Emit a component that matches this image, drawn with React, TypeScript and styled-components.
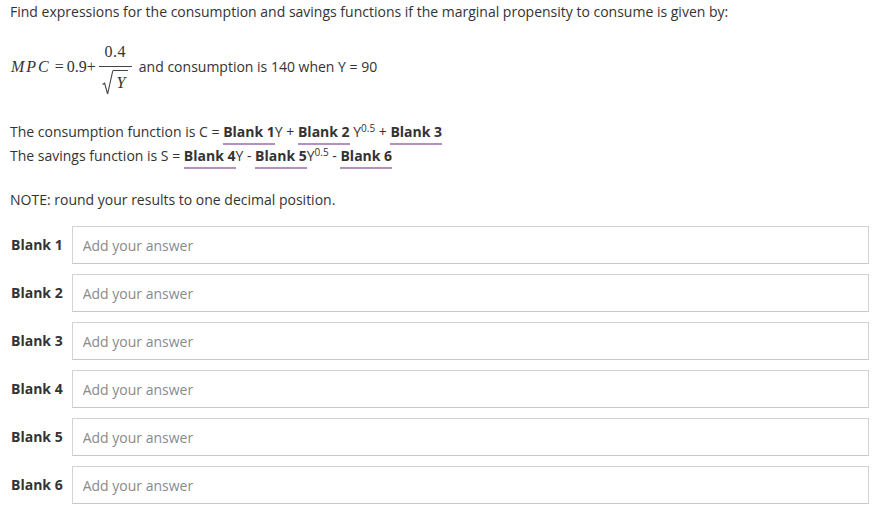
import React from "react";
import styled, { createGlobalStyle } from "styled-components";

const Global = createGlobalStyle`
  html, body { margin: 0; padding: 0; background: #ffffff; }
  body { font-family: "Open Sans", "Noto Sans", sans-serif; color: #333333; }
`;

const Page = styled.div`
  padding: 2px 15px 0 10px;
  font-size: 14px;
  line-height: 20px;
`;

const Para = styled.p<{ $mt?: number }>`
  margin: ${(p) => p.$mt ?? 0}px 0 0 0;
`;

const MathLine = styled.div`
  display: flex;
  align-items: center;
  margin-top: 15px;
  height: 60px;
`;

const MathExpr = styled.span`
  font-family: "Liberation Serif", "Times New Roman", serif;
  font-size: 16px;
  display: inline-flex;
  align-items: center;
  color: #333;
  padding-left: 1px;
`;

const Ital = styled.span`
  font-family: "Liberation Serif", "Times New Roman", serif;
  font-style: italic;
  letter-spacing: 2px;
`;

const Op = styled.span<{ $l?: number; $r?: number }>`
  font-family: "Liberation Serif", "Times New Roman", serif;
  margin: 0 ${(p) => p.$r ?? 0}px 0 ${(p) => p.$l ?? 0}px;
`;

const Numb = styled.span`
  font-family: "Liberation Serif", "Times New Roman", serif;
`;

const Frac = styled.span`
  display: inline-flex;
  flex-direction: column;
  align-items: center;
  margin: 2px 0 0 1px;
  width: 33px;
`;

const Num = styled.span`
  padding: 0 0 4px;
  border-bottom: 1px solid #444;
  line-height: 20px;
  width: 100%;
  text-align: center;
  letter-spacing: 0.5px;
`;

const Den = styled.span`
  display: inline-flex;
  align-items: flex-start;
  padding-top: 3px;
  height: 25px;
`;

const Radicand = styled.span`
  font-style: italic;
  border-top: 1px solid #444;
  padding: 3px 3px 0 3px;
  line-height: 18px;
`;

const Tail = styled.span`
  margin-left: 7px;
  font-family: "Open Sans", sans-serif;
  font-size: 14px;
`;

const Blank = styled.b`
  font-weight: 700;
  border-bottom: 2px solid #b48fc4;
  padding-bottom: 2px;
`;

const Sup = styled.sup`
  font-size: 10px;
  line-height: 0;
  vertical-align: 5px;
`;

const Rows = styled.div`
  display: flex;
  flex-direction: column;
  gap: 10px;
  margin-top: 16px;
`;

const Row = styled.div`
  display: flex;
  align-items: center;
  gap: 9px;
`;

const Label = styled.span`
  font-weight: 700;
  white-space: nowrap;
  padding-left: 1px;
`;

const Input = styled.input`
  flex: 1;
  height: 38px;
  box-sizing: border-box;
  border: 1px solid #d4d4d4;
  border-bottom-color: #c8c8c8;
  background: #fff;
  padding: 0 10px;
  font-family: "Open Sans", sans-serif;
  font-size: 14px;
  color: #333;
  outline: none;
  &::placeholder { color: #8a8a8a; }
`;

const Radical = () => (
  <svg width="11" height="25" viewBox="0 0 11 25" style={{ display: "block" }}>
    <path d="M0.5 14.5 L2.6 13.2 L5.6 24 L10.8 0.5" fill="none" stroke="#444" strokeWidth="1.1" />
  </svg>
);

export default function App() {
  const blanks = [1, 2, 3, 4, 5, 6];
  return (
    <>
      <Global />
      <Page>
        <Para>Find expressions for the consumption and savings functions if the marginal propensity to consume is given by:</Para>
        <MathLine>
          <MathExpr>
            <Ital>MPC</Ital>
            <Op $l={4} $r={3}>=</Op>
            <Numb>0.9</Numb>
            <Op $r={2}>+</Op>
            <Frac>
              <Num>0.4</Num>
              <Den>
                <Radical />
                <Radicand>Y</Radicand>
              </Den>
            </Frac>
          </MathExpr>
          <Tail>and consumption is 140 when Y = 90</Tail>
        </MathLine>
        <Para $mt={25}>
          The consumption function is C = <Blank>Blank 1</Blank>Y + <Blank>Blank 2</Blank> Y<Sup>0.5</Sup> + <Blank>Blank 3</Blank>
        </Para>
        <Para $mt={4}>
          The savings function is S = <Blank>Blank 4</Blank>Y - <Blank>Blank 5</Blank>Y<Sup>0.5</Sup> - <Blank>Blank 6</Blank>
        </Para>
        <Para $mt={24}>NOTE: round your results to one decimal position.</Para>
        <Rows>
          {blanks.map((n) => (
            <Row key={n}>
              <Label>Blank {n}</Label>
              <Input placeholder="Add your answer" />
            </Row>
          ))}
        </Rows>
      </Page>
    </>
  );
}
